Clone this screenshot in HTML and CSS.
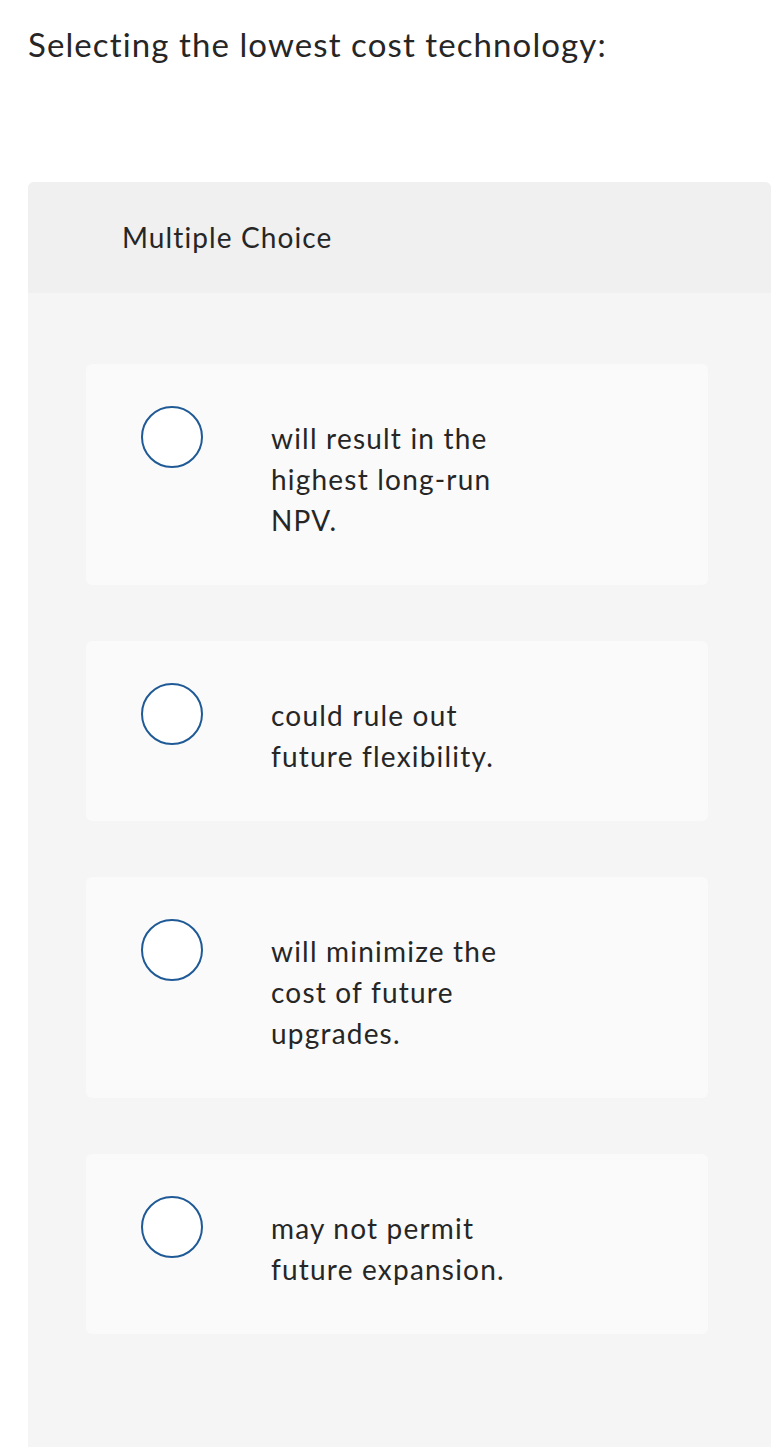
FILE: index.html
```html
<!DOCTYPE html>
<html>
<head>
<meta charset="utf-8">
<link rel="stylesheet" href="styles.css">
</head>
<body>
<div class="page">
  <h1 class="question">Selecting the lowest cost technology:</h1>
  <div class="panel">
    <div class="panel-header">Multiple Choice</div>
    <div class="panel-body">
      <div class="option">
        <span class="radio"></span>
        <div class="option-text">will result in the highest long-run NPV.</div>
      </div>
      <div class="option">
        <span class="radio"></span>
        <div class="option-text">could rule out future flexibility.</div>
      </div>
      <div class="option">
        <span class="radio"></span>
        <div class="option-text">will minimize the cost of future upgrades.</div>
      </div>
      <div class="option">
        <span class="radio"></span>
        <div class="option-text">may not permit future expansion.</div>
      </div>
    </div>
  </div>
</div>
</body>
</html>
```
FILE: styles.css
```css
html, body {
  margin: 0;
  padding: 0;
  background: #ffffff;
}
body {
  font-family: Lato, "Noto Sans", sans-serif;
  color: #262626;
  height: 1447px;
  overflow: hidden;
}
.page {
  padding: 22px 13px 0 28px;
}
.question {
  margin: 0;
  font-weight: 400;
  font-size: 33px;
  line-height: 44px;
  letter-spacing: 1.1px;
  color: #262626;
}
.panel {
  margin-top: 116px;
  border-radius: 6px 6px 0 0;
  overflow: hidden;
  background: #f5f5f5;
  min-height: 1300px;
}
.panel-header {
  background: #f0f0f0;
  height: 111px;
  box-sizing: border-box;
  padding: 36px 0 0 94px;
  font-size: 28px;
  line-height: 38px;
  letter-spacing: 1.1px;
}
.panel-body {
  padding: 71px 63px 40px 58px;
  display: flex;
  flex-direction: column;
  gap: 56px;
}
.option {
  background: #fafafa;
  border-radius: 6px;
  display: flex;
  align-items: flex-start;
  padding: 42px 0 44px 55px;
}
.radio {
  flex: none;
  width: 58px;
  height: 58px;
  border: 2px solid #1f5a96;
  border-radius: 50%;
  background: #ffffff;
}
.option-text {
  margin-left: 68px;
  padding-top: 12px;
  width: 255px;
  font-size: 28px;
  line-height: 41px;
  letter-spacing: 1.2px;
}
```
